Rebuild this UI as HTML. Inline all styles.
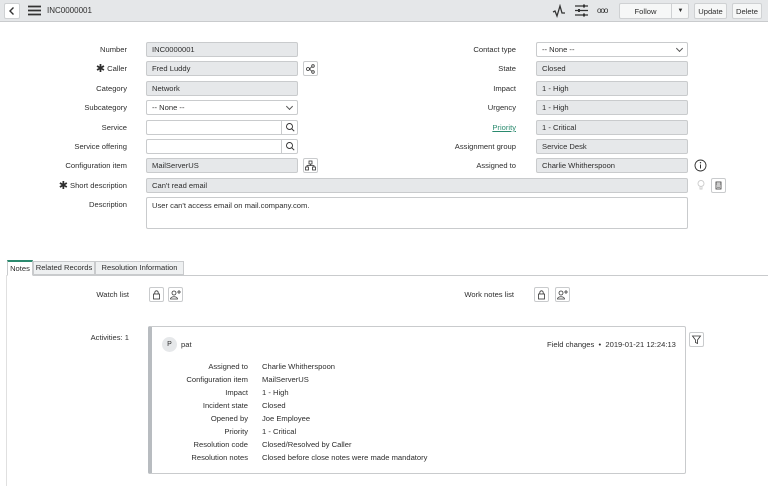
<!DOCTYPE html>
<html><head><style>
*{box-sizing:border-box;margin:0;padding:0}
body{width:768px;height:486px;overflow:hidden;background:#fff;font-family:"Liberation Sans",sans-serif;font-size:7.6px;color:#2e2e2e;position:relative}
.a{position:absolute}
.hdr{left:0;top:0;width:768px;height:22px;background:#e5e7e9;border-bottom:1px solid #c9cbcd}
.btn{position:absolute;background:#f6f7f7;border:1px solid #cfd1d3;border-radius:2px;text-align:center;line-height:15px;font-size:7.6px}
.lbl{position:absolute;text-align:right;width:200px;line-height:15px}
.f{position:absolute;height:15px;border:1px solid #c9cbcd;border-radius:2px;background:#e6e8ea;padding-left:5px;line-height:13px}
.w{background:#fff}
.ib{position:absolute;width:15px;height:15px;border:1px solid #c9cbcd;border-radius:2px;background:#fff}
.sel::after{content:"";position:absolute;right:5px;top:3px;width:4px;height:4px;border-right:1px solid #555;border-bottom:1px solid #555;transform:rotate(45deg)}
</style></head><body>
<div class="a hdr"></div>
<div class="btn" style="left:4px;top:3px;width:16px;height:16px;background:#fff"><svg width="14" height="14" viewBox="0 0 14 14"><path d="M8.5 3.5L5 7l3.5 3.5" stroke="#333" stroke-width="1.4" fill="none"/></svg></div>
<svg class="a" style="left:28px;top:5px" width="13" height="11"><path d="M0 1.5h13M0 5.5h13M0 9.5h13" stroke="#333" stroke-width="1.8"/></svg>
<div class="a" style="left:47px;top:6px;font-size:8px">INC0000001</div>
<svg class="a" style="left:552px;top:4px" width="14" height="14"><path d="M1 8l2-1 2 5 3-10 2 7h3" stroke="#333" stroke-width="1.3" fill="none"/></svg>
<svg class="a" style="left:575px;top:4px" width="13" height="13"><path d="M0 2h13M0 6.5h13M0 11h13" stroke="#333" stroke-width="1.2"/><rect x="8" y="0.5" width="2" height="3" fill="#333"/><rect x="3" y="5" width="2" height="3" fill="#333"/><rect x="8" y="9.5" width="2" height="3" fill="#333"/></svg>
<div class="a" style="left:597px;top:6px;font-size:8px;letter-spacing:-1px">ooo</div>
<div class="btn" style="left:619px;top:3px;width:70px;height:16px"><span style="position:absolute;left:0;width:51px;text-align:center">Follow</span><span style="position:absolute;left:51px;top:0;height:14px;border-left:1px solid #cfd1d3;width:18px;font-size:6px">▼</span></div>
<div class="btn" style="left:694px;top:3px;width:33px;height:16px">Update</div>
<div class="btn" style="left:732px;top:3px;width:30px;height:16px">Delete</div>

<div class="lbl" style="left:-73px;top:42px">Number</div><div class="f" style="left:146px;top:42px;width:152px">INC0000001</div>
<div class="lbl" style="left:-73px;top:61px"><span style="font-size:11px;position:relative;top:1px">✱</span> Caller</div><div class="f" style="left:146px;top:61px;width:152px">Fred Luddy</div>
<div class="ib" style="left:303px;top:61px"><svg width="13" height="13"><circle cx="4" cy="7" r="1.5" stroke="#333" fill="none" stroke-width=".8"/><circle cx="9" cy="4" r="1.3" stroke="#333" fill="none" stroke-width=".8"/><circle cx="9" cy="10" r="1.3" stroke="#333" fill="none" stroke-width=".8"/><path d="M5.5 7L8 4.5M5.5 7L8 9.5" stroke="#333" stroke-width=".8"/></svg></div>
<div class="lbl" style="left:-73px;top:81px">Category</div><div class="f" style="left:146px;top:81px;width:152px">Network</div>
<div class="lbl" style="left:-73px;top:100px">Subcategory</div><div class="f w sel" style="left:146px;top:100px;width:152px">-- None --</div>
<div class="lbl" style="left:-73px;top:120px">Service</div><div class="f w" style="left:146px;top:120px;width:152px"></div><div class="a" style="left:281px;top:120px;width:17px;height:15px;border-left:1px solid #c9cbcd"><svg width="16" height="15"><circle cx="7.5" cy="6.5" r="3" stroke="#333" fill="none" stroke-width=".9"/><path d="M9.7 8.7l2.5 2.5" stroke="#333" stroke-width="1"/></svg></div>
<div class="lbl" style="left:-73px;top:139px">Service offering</div><div class="f w" style="left:146px;top:139px;width:152px"></div><div class="a" style="left:281px;top:139px;width:17px;height:15px;border-left:1px solid #c9cbcd"><svg width="16" height="15"><circle cx="7.5" cy="6.5" r="3" stroke="#333" fill="none" stroke-width=".9"/><path d="M9.7 8.7l2.5 2.5" stroke="#333" stroke-width="1"/></svg></div>
<div class="lbl" style="left:-73px;top:158px">Configuration item</div><div class="f" style="left:146px;top:158px;width:152px">MailServerUS</div>
<div class="ib" style="left:303px;top:158px"><svg width="13" height="13"><rect x="5" y="2" width="3" height="3" fill="none" stroke="#333" stroke-width=".8"/><rect x="1.5" y="8" width="3" height="3" fill="none" stroke="#333" stroke-width=".8"/><rect x="8.5" y="8" width="3" height="3" fill="none" stroke="#333" stroke-width=".8"/><path d="M6.5 5v1.5H3V8M6.5 6.5H10V8" stroke="#333" stroke-width=".8" fill="none"/></svg></div>
<div class="lbl" style="left:-73px;top:178px"><span style="font-size:11px;position:relative;top:1px">✱</span> Short description</div><div class="f" style="left:146px;top:178px;width:542px">Can't read email</div>
<svg class="a" style="left:696px;top:179px" width="10" height="12"><circle cx="5" cy="4.5" r="3" fill="none" stroke="#ccc" stroke-width=".9"/><path d="M4 8v2h2V8" fill="none" stroke="#ccc" stroke-width=".9"/></svg>
<div class="ib" style="left:711px;top:178px"><svg width="13" height="13"><rect x="4" y="3" width="5" height="7" fill="none" stroke="#333" stroke-width=".8"/><path d="M4 5h5M5 7h3M5 8.5h3" stroke="#333" stroke-width=".6"/></svg></div>
<div class="lbl" style="left:-73px;top:198px;line-height:13px">Description</div><div class="f w" style="left:146px;top:197px;width:542px;height:32px;padding-top:1px">User can't access email on mail.company.com.</div>

<div class="lbl" style="left:316px;top:42px">Contact type</div><div class="f w sel" style="left:536px;top:42px;width:152px">-- None --</div>
<div class="lbl" style="left:316px;top:61px">State</div><div class="f" style="left:536px;top:61px;width:152px">Closed</div>
<div class="lbl" style="left:316px;top:81px">Impact</div><div class="f" style="left:536px;top:81px;width:152px">1 - High</div>
<div class="lbl" style="left:316px;top:100px">Urgency</div><div class="f" style="left:536px;top:100px;width:152px">1 - High</div>
<div class="lbl" style="left:316px;top:120px;color:#2a8a6e;text-decoration:underline">Priority</div><div class="f" style="left:536px;top:120px;width:152px">1 - Critical</div>
<div class="lbl" style="left:316px;top:139px">Assignment group</div><div class="f" style="left:536px;top:139px;width:152px">Service Desk</div>
<div class="lbl" style="left:316px;top:158px">Assigned to</div><div class="f" style="left:536px;top:158px;width:152px">Charlie Whitherspoon</div>
<div class="ib" style="left:693px;top:158px;border-radius:50%;border:none"><svg width="15" height="15"><circle cx="7.5" cy="7.5" r="5.5" fill="none" stroke="#333" stroke-width=".9"/><path d="M7.5 6.5v4" stroke="#333" stroke-width="1"/><circle cx="7.5" cy="4.7" r=".7" fill="#333"/></svg></div>

<div class="a" style="left:6px;top:275px;width:762px;border-top:1px solid #c9cbcd"></div>
<div class="a" style="left:6px;top:275px;height:211px;border-left:1px solid #e0e0e0"></div>
<div class="a" style="left:7px;top:260px;width:26px;height:16px;border:1px solid #c9cbcd;border-top:2px solid #2a8a6e;border-bottom:1px solid #fff;background:#fff;text-align:center;line-height:13px">Notes</div>
<div class="a" style="left:33px;top:261px;width:62px;height:14px;border:1px solid #c9cbcd;background:#eef0f1;text-align:center;line-height:12px">Related Records</div>
<div class="a" style="left:95px;top:261px;width:89px;height:14px;border:1px solid #c9cbcd;background:#eef0f1;text-align:center;line-height:12px">Resolution Information</div>

<div class="lbl" style="left:-71px;top:287px">Watch list</div>
<div class="ib" style="left:149px;top:287px"><svg width="13" height="13"><rect x="3.5" y="6" width="6" height="5" fill="none" stroke="#333" stroke-width=".8"/><path d="M4.8 6V4.5a1.7 1.7 0 0 1 3.4 0V6" fill="none" stroke="#333" stroke-width=".8"/></svg></div>
<div class="ib" style="left:168px;top:287px"><svg width="13" height="13"><circle cx="5" cy="5" r="2" fill="none" stroke="#333" stroke-width=".8"/><path d="M1.5 11c0-3 7-3 7 0zM10 2v4M8 4h4" fill="none" stroke="#333" stroke-width=".8"/></svg></div>
<div class="lbl" style="left:314px;top:287px">Work notes list</div>
<div class="ib" style="left:534px;top:287px"><svg width="13" height="13"><rect x="3.5" y="6" width="6" height="5" fill="none" stroke="#333" stroke-width=".8"/><path d="M4.8 6V4.5a1.7 1.7 0 0 1 3.4 0V6" fill="none" stroke="#333" stroke-width=".8"/></svg></div>
<div class="ib" style="left:555px;top:287px"><svg width="13" height="13"><circle cx="5" cy="5" r="2" fill="none" stroke="#333" stroke-width=".8"/><path d="M1.5 11c0-3 7-3 7 0zM10 2v4M8 4h4" fill="none" stroke="#333" stroke-width=".8"/></svg></div>

<div class="lbl" style="left:-71px;top:330px">Activities: 1</div>
<div class="a" style="left:148px;top:326px;width:538px;height:148px;border:1px solid #c9cbcd;border-left:4px solid #b8bcc0;border-radius:2px"></div>
<div class="ib" style="left:689px;top:332px"><svg width="13" height="13"><path d="M2.5 3h8L7.5 7v3.5l-2 -1V7z" fill="none" stroke="#333" stroke-width=".8"/></svg></div>
<div class="a" style="left:162px;top:337px;width:15px;height:15px;border-radius:50%;background:#e6e8ea;text-align:center;line-height:15px;font-size:7px">P</div>
<div class="a" style="left:181px;top:340px">pat</div>
<div class="a" style="left:547px;top:340px">Field changes &nbsp;•&nbsp; 2019-01-21 12:24:13</div>
<div class="a" style="left:148px;top:360px;width:100px;text-align:right;line-height:13px">Assigned to<br>Configuration item<br>Impact<br>Incident state<br>Opened by<br>Priority<br>Resolution code<br>Resolution notes</div>
<div class="a" style="left:262px;top:360px;line-height:13px">Charlie Whitherspoon<br>MailServerUS<br>1 - High<br>Closed<br>Joe Employee<br>1 - Critical<br>Closed/Resolved by Caller<br>Closed before close notes were made mandatory</div>
</body></html>
